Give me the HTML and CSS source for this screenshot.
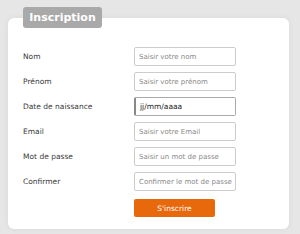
FILE: index.html
```html
<!DOCTYPE html>
<html lang="fr">
<head>
  <meta charset="UTF-8" />
  <title>Inscription</title>
  <link rel="stylesheet" href="styles.css">
</head>
<body>
  <div class="card">
    <h2 class="tab">Inscription</h2>
    <form class="form">
      <label for="nom">Nom</label>
      <input id="nom" type="text" placeholder="Saisir votre nom">

      <label for="prenom">Prénom</label>
      <input id="prenom" type="text" placeholder="Saisir votre prénom">

      <label for="naissance">Date de naissance</label>
      <div class="date">jj/mm/aaaa</div>

      <label for="email">Email</label>
      <input id="email" type="text" placeholder="Saisir votre Email">

      <label for="mdp">Mot de passe</label>
      <input id="mdp" type="password" placeholder="Saisir un mot de passe">

      <label for="confirm">Confirmer</label>
      <input id="confirm" type="password" placeholder="Confirmer le mot de passe">

      <span></span>
      <button type="button">S'inscrire</button>
    </form>
  </div>
</body>
</html>
```

FILE: styles.css
```css
* {
  box-sizing: border-box;
}

body {
  margin: 0;
  padding: 18px 11px 5px 8px;
  background: #e6e6e6;
  font-family: 'DejaVu Sans', Verdana, sans-serif;
  color: #333;
}

.card {
  position: relative;
  background: #fff;
  border-radius: 6px;
  height: 211px;
  padding: 29px 0 0 15px;
  box-shadow: 0 0 6px rgba(0, 0, 0, 0.06);
}

.tab {
  position: absolute;
  top: -11px;
  left: 15px;
  margin: 0;
  width: 79px;
  height: 21px;
  line-height: 21px;
  background: #a9a9a9;
  color: #fff;
  border-radius: 3px;
  font-size: 11px;
  font-weight: bold;
  text-align: center;
}

.form {
  display: grid;
  grid-template-columns: 111px 102px;
  row-gap: 6px;
  align-items: center;
}

label {
  font-size: 7.5px;
  color: #3a3a3a;
}

input,
.date {
  width: 102px;
  height: 19px;
  border: 1px solid #ccc;
  border-radius: 2px;
  padding: 0 3px 0 4px;
  font-family: inherit;
  font-size: 7px;
  color: #333;
  outline: none;
}

input::placeholder {
  color: #888;
}

.date {
  display: flex;
  align-items: center;
  border-color: #aaa;
  border-left: 2px solid #888;
  font-size: 7.5px;
  color: #222;
}

button {
  margin-top: 2px;
  width: 81px;
  height: 18px;
  border: none;
  border-radius: 2px;
  background: #e8690c;
  color: #fff;
  font-family: inherit;
  font-size: 7.5px;
  cursor: pointer;
}
```
